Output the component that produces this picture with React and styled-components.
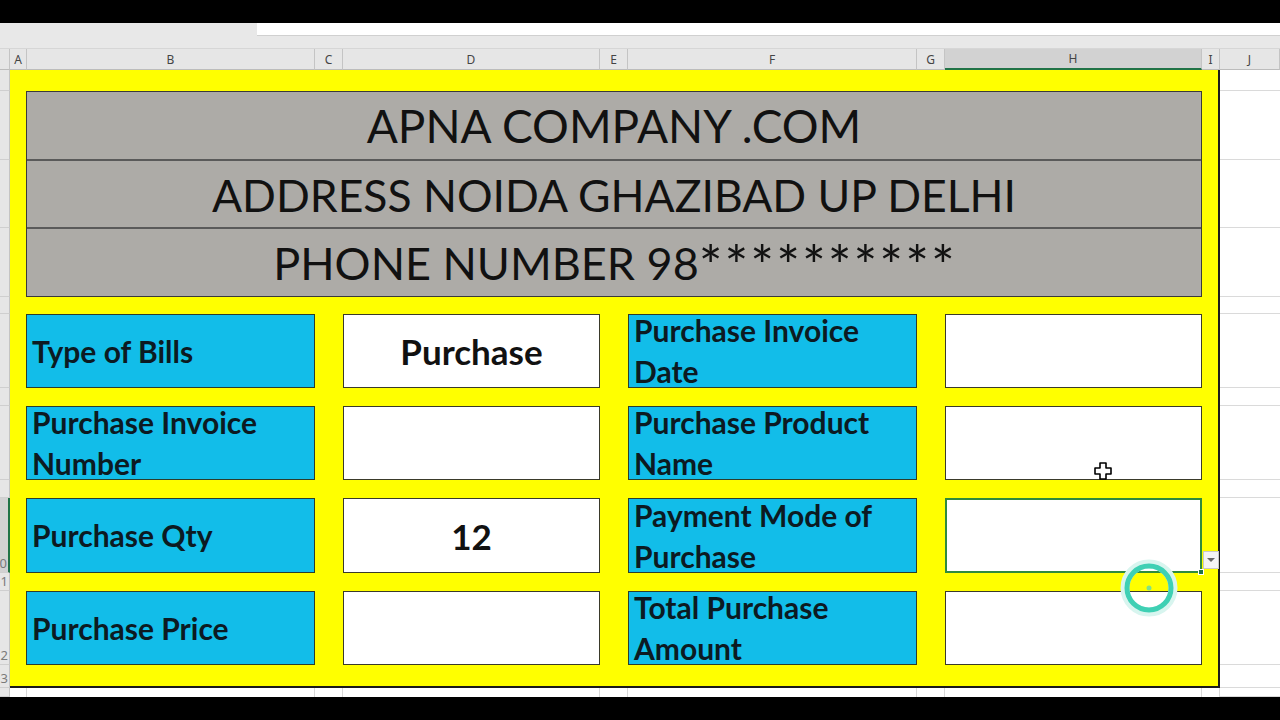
import styled, { createGlobalStyle } from "styled-components";

const GlobalStyle = createGlobalStyle`
  html, body { margin: 0; padding: 0; background: #000; }
  body { width: 1280px; height: 720px; overflow: hidden; font-family: "Lato", "Open Sans", sans-serif; }
  * { box-sizing: border-box; }
`;

const COLS = [
  { key: "corner", w: 10, label: "" },
  { key: "A", w: 17, label: "A" },
  { key: "B", w: 288, label: "B" },
  { key: "C", w: 28, label: "C" },
  { key: "D", w: 257, label: "D" },
  { key: "E", w: 28, label: "E" },
  { key: "F", w: 289, label: "F" },
  { key: "G", w: 28, label: "G" },
  { key: "H", w: 257, label: "H" },
  { key: "I", w: 18, label: "I" },
  { key: "J", w: 60, label: "J" },
];

// row heights from row 1 down to the strip under the yellow block
const ROWS = [21, 69, 68, 69, 17, 74, 18, 74, 18, 75, 18, 74, 23, 9];
const SELECTED_ROW = 10;

const FIELDS = [
  { label: "Type of Bills", value: "Purchase" },
  { label: "Purchase Invoice Date", value: "" },
  { label: "Purchase Invoice Number", value: "" },
  { label: "Purchase Product Name", value: "" },
  { label: "Purchase Qty", value: "12" },
  { label: "Payment Mode of Purchase", value: "", selected: true },
  { label: "Purchase Price", value: "" },
  { label: "Total Purchase Amount", value: "" },
];

const Page = styled.div`
  position: relative;
  width: 1280px;
  height: 720px;
  display: flex;
  flex-direction: column;
  background: #fff;
  overflow: hidden;
`;

const BlackBar = styled.div`
  height: ${(p) => p.h}px;
  background: #000;
  flex: none;
`;

const FormulaStrip = styled.div`
  height: 26px;
  background: #e8e8e8;
  padding-left: 257px;
  border-bottom: 1px solid #d6d6d6;
  flex: none;
`;

const FormulaBox = styled.div`
  height: 13px;
  background: #fff;
  border-bottom: 1px solid #d0d0d0;
`;

const HeaderRow = styled.div`
  display: flex;
  height: 21px;
  flex: none;
  background: #e6e6e6;
`;

const HeaderCell = styled.div`
  width: ${(p) => p.w}px;
  flex: none;
  display: flex;
  align-items: center;
  justify-content: center;
  font-family: "Noto Sans", "DejaVu Sans", sans-serif;
  font-size: 12px;
  color: #444;
  background: ${(p) => (p.active ? "#d2d2d2" : "#e6e6e6")};
  border-right: 1px solid #c4c4c4;
  border-bottom: ${(p) => (p.active ? "2px solid #217346" : "1px solid #bcbcbc")};
`;

const Body = styled.div`
  display: flex;
  flex: none;
  height: 627px;
`;

const GutterCol = styled.div`
  display: flex;
  flex-direction: column;
  width: ${(p) => p.w}px;
  flex: none;
`;

const RowHead = styled.div`
  height: ${(p) => p.h}px;
  flex: none;
  background: ${(p) => (p.active ? "#d2d2d2" : "#e6e6e6")};
  border-bottom: 1px solid #cfcfcf;
  border-right: ${(p) => (p.active ? "2px solid #217346" : "1px solid #c4c4c4")};
  overflow: hidden;
  display: flex;
  align-items: flex-end;
  justify-content: flex-end;
  padding-right: 1px;
  font-family: "Noto Sans", "DejaVu Sans", sans-serif;
  font-size: 13px;
  line-height: 17px;
  color: #7a7a7a;
  white-space: nowrap;
`;

const GridRow = styled.div`
  height: ${(p) => p.h}px;
  flex: none;
  background: #fff;
  border-bottom: 1px solid #dadada;
`;

const Middle = styled.div`
  display: flex;
  flex-direction: column;
  width: 1210px;
  flex: none;
`;

const YellowPanel = styled.div`
  height: 618px;
  background: #ffff00;
  border-right: 2px solid #1b1b1b;
  border-bottom: 2px solid #1b1b1b;
  padding: 21px 16px 0 16px;
  display: flex;
  flex-direction: column;
  gap: 17px;
`;

const TitleBlock = styled.div`
  height: 206px;
  background: #adaba7;
  border: 1px solid #3a3a3a;
  display: flex;
  flex-direction: column;
`;

const TitleLine = styled.div`
  height: ${(p) => p.h}px;
  flex: none;
  display: flex;
  align-items: center;
  justify-content: center;
  font-size: ${(p) => p.size}px;
  color: #111;
  white-space: pre;
  border-bottom: ${(p) => (p.last ? "none" : "2px solid #5a5a5a")};
`;

const Stars = styled.span`
  font-size: 56px;
  line-height: 1;
  letter-spacing: 2px;
  margin-right: -2px;
  margin-top: 4px;
`;

const FieldGrid = styled.div`
  display: grid;
  grid-template-columns: 289px 257px 289px 257px;
  grid-template-rows: 74px 74px 75px 74px;
  column-gap: 28px;
  row-gap: 18px;
`;

const LabelCell = styled.div`
  background: #12bde9;
  border: 1px solid #2c3d2c;
  display: flex;
  align-items: center;
  padding-left: 5px;
  padding-right: 20px;
  font-weight: 700;
  font-size: 30px;
  line-height: 41px;
  color: #0c1a22;
`;

const ValueCell = styled.div`
  position: relative;
  background: #fff;
  border: ${(p) => (p.selected ? "2px solid #2f8a3e" : "1px solid #3a3a2a")};
  display: flex;
  align-items: center;
  justify-content: center;
  font-weight: 700;
  font-size: 35px;
  color: #111;
`;

const FillHandle = styled.div`
  position: absolute;
  right: -4px;
  bottom: -4px;
  width: 6px;
  height: 6px;
  background: #217346;
  border: 1px solid #fff;
`;

const DropButton = styled.div`
  position: absolute;
  right: -19px;
  bottom: 2px;
  width: 16px;
  height: 18px;
  background: #f4f4f4;
  border: 1px solid #c8c8c8;
  display: flex;
  align-items: center;
  justify-content: center;
  &::after {
    content: "";
    border-left: 4px solid transparent;
    border-right: 4px solid transparent;
    border-top: 4px solid #666;
  }
`;

const BottomStrip = styled.div`
  display: flex;
  height: 9px;
  background: #fff;
`;

const StripCell = styled.div`
  width: ${(p) => p.w}px;
  flex: none;
  border-right: 1px solid #d8d8d8;
`;

const CursorMark = styled.svg`
  position: absolute;
  left: 1094px;
  top: 462px;
`;

const ClickRing = styled.svg`
  position: absolute;
  left: 1119px;
  top: 558px;
`;

function Field({ label, value, selected }) {
  return (
    <>
      <LabelCell>{label}</LabelCell>
      <ValueCell selected={selected}>
        {value}
        {selected && (
          <>
            <DropButton />
            <FillHandle />
          </>
        )}
      </ValueCell>
    </>
  );
}

export default function App() {
  const midCols = COLS.slice(1, 10);
  return (
    <Page>
      <GlobalStyle />
      <BlackBar h={23} />
      <FormulaStrip>
        <FormulaBox />
      </FormulaStrip>
      <HeaderRow>
        {COLS.map((c) => (
          <HeaderCell key={c.key} w={c.w} active={c.key === "H"}>
            {c.label}
          </HeaderCell>
        ))}
      </HeaderRow>
      <Body>
        <GutterCol w={10}>
          {ROWS.map((h, i) => (
            <RowHead key={i} h={h} active={i + 1 === SELECTED_ROW}>
              {i + 1 >= 10 && i + 1 <= 13 ? i + 1 : ""}
            </RowHead>
          ))}
        </GutterCol>
        <Middle>
          <YellowPanel>
            <TitleBlock>
              <TitleLine h={69} size={46}>
                APNA COMPANY .COM
              </TitleLine>
              <TitleLine h={68} size={44.5}>
                ADDRESS NOIDA GHAZIBAD UP DELHI
              </TitleLine>
              <TitleLine h={67} size={45} last>
                PHONE NUMBER 98<Stars>**********</Stars>
              </TitleLine>
            </TitleBlock>
            <FieldGrid>
              {FIELDS.map((f) => (
                <Field key={f.label} {...f} />
              ))}
            </FieldGrid>
          </YellowPanel>
          <BottomStrip>
            {midCols.map((c) => (
              <StripCell key={c.key} w={c.w} />
            ))}
          </BottomStrip>
        </Middle>
        <GutterCol w={60}>
          {ROWS.map((h, i) => (
            <GridRow key={i} h={h} />
          ))}
        </GutterCol>
      </Body>
      <BlackBar h={23} />

      <CursorMark width="18" height="18" viewBox="0 0 18 18">
        <path
          d="M6 1h6v5h5v6h-5v5H6v-5H1V6h5z"
          fill="#fff"
          stroke="#000"
          strokeWidth="1.6"
          strokeLinejoin="round"
        />
      </CursorMark>
      <ClickRing width="60" height="60" viewBox="0 0 60 60">
        <circle cx="30" cy="30" r="24" fill="none" stroke="#d8f5ef" strokeWidth="9" />
        <circle cx="30" cy="30" r="22" fill="none" stroke="#3fd0b4" strokeWidth="5" />
        <circle cx="30" cy="30" r="2.5" fill="#7fe08a" />
      </ClickRing>
    </Page>
  );
}
